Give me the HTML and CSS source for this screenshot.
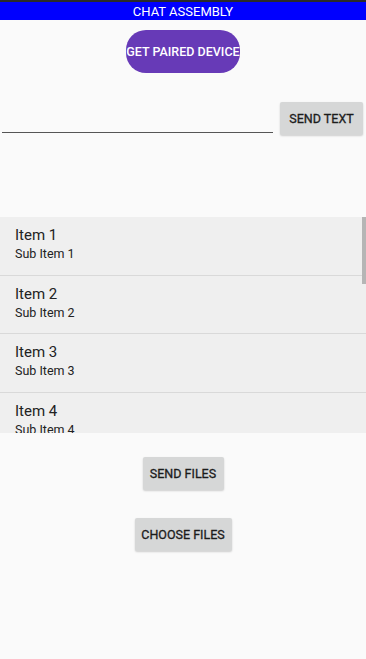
FILE: index.html
```html
<!DOCTYPE html>
<html>
<head>
<meta charset="utf-8">
<link rel="stylesheet" href="styles.css">
</head>
<body>
<div class="status"></div>
<header class="titlebar">CHAT ASSEMBLY</header>
<main class="content">
  <div class="paired-row">
    <button class="pill">GET PAIRED DEVICE</button>
  </div>
  <div class="send-row">
    <div class="edit"></div>
    <button class="flat send-text">SEND TEXT</button>
  </div>
  <div class="list">
    <div class="item"><div class="t1">Item 1</div><div class="t2">Sub Item 1</div></div>
    <div class="item"><div class="t1">Item 2</div><div class="t2">Sub Item 2</div></div>
    <div class="item"><div class="t1">Item 3</div><div class="t2">Sub Item 3</div></div>
    <div class="item"><div class="t1">Item 4</div><div class="t2">Sub Item 4</div></div>
    <div class="scrollbar"></div>
  </div>
  <div class="files">
    <button class="flat send-files">SEND FILES</button>
    <button class="flat choose-files">CHOOSE FILES</button>
  </div>
</main>
</body>
</html>
```
FILE: styles.css
```css
* { box-sizing: border-box; }
html, body { margin: 0; padding: 0; }
body {
  width: 366px;
  height: 659px;
  background: #fafafa;
  font-family: Roboto, "Liberation Sans", sans-serif;
  overflow: hidden;
}
.status { height: 2px; background: #2a2a2a; }
.titlebar {
  height: 18px;
  background: #0000ff;
  color: #fff;
  font-size: 13px;
  line-height: 19px;
  text-align: center;
}
.content { display: flex; flex-direction: column; }
.paired-row { display: flex; justify-content: center; padding-top: 10px; }
.pill {
  width: 114px;
  height: 43px;
  border: none;
  border-radius: 20px;
  background: #673ab7;
  color: #fff;
  font-family: Roboto, sans-serif;
  font-weight: 500;
  font-size: 12.5px;
  padding: 0;
  white-space: nowrap;
  display: flex;
  align-items: center;
  justify-content: center;
  overflow: visible;
}
.send-row {
  display: flex;
  align-items: flex-start;
  margin-top: 29px;
  padding-left: 2px;
}
.edit {
  width: 271px;
  height: 31px;
  border-bottom: 1px solid #555;
}
.flat {
  border: none;
  background: #d6d7d7;
  color: #1c1c1c;
  font-family: Roboto, sans-serif;
  font-weight: 400;
  font-size: 12.5px;
  -webkit-text-stroke: 0.3px #1c1c1c;
  padding: 0;
  box-shadow: 0 1px 2px rgba(0,0,0,0.18);
  border-radius: 2px;
}
.send-text { width: 83px; height: 33px; margin-left: 7px; }
.list {
  position: relative;
  margin-top: 82px;
  height: 216px;
  overflow: hidden;
  background: #efefef;
}
.item {
  height: 58.5px;
  padding: 10px 15px 0;
  border-bottom: 1px solid #d9d9d9;
  color: #222;
}
.t1 { font-size: 15px; line-height: 17px; }
.t2 { font-size: 12.5px; line-height: 15px; margin-top: 2px; }
.scrollbar {
  position: absolute;
  right: 0;
  top: 0;
  width: 4px;
  height: 67px;
  background: #b5b5b5;
}
.files {
  display: flex;
  flex-direction: column;
  align-items: center;
  padding-top: 24px;
  gap: 28px;
}
.send-files { width: 81px; height: 33px; }
.choose-files { width: 97px; height: 33px; }
```
